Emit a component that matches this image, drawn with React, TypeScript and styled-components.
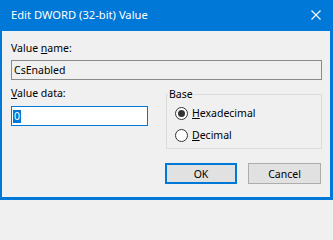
import React from 'react';
import styled, { createGlobalStyle } from 'styled-components';

const accent = '#0078d7';
const uiFont = `"Segoe UI", "Noto Sans", sans-serif`;

const GlobalStyle = createGlobalStyle`
    html, body {
        margin: 0;
        padding: 0;
        background: #f0f0f0;
    }
    * {
        box-sizing: border-box;
    }
`;

const Window = styled.div`
    width: 333px;
    height: 200px;
    display: flex;
    flex-direction: column;
    background: #f0f0f0;
    border-left: 2px solid ${accent};
    border-right: 3px solid ${accent};
    border-bottom: 3px solid ${accent};
    font-family: ${uiFont};
    font-size: 10.5px;
    color: #000;
    overflow: hidden;
`;

const TitleBar = styled.div`
    height: 31px;
    flex: none;
    display: flex;
    align-items: center;
    justify-content: space-between;
    padding: 0 9px 0 9px;
    background: ${accent};
    color: #fff;
    font-size: 11.2px;
`;

const Title = styled.span`
    line-height: 14px;
    padding-bottom: 1px;
`;

const CloseIcon = styled.svg`
    width: 10px;
    height: 10px;
    display: block;
    margin-top: -1px;
`;

const Body = styled.div`
    display: flex;
    flex-direction: column;
    padding: 10px 8px 0 9px;
`;

const Label = styled.div`
    line-height: 14px;
    white-space: nowrap;
`;

const TextBox = styled.div<{ $focused?: boolean }>`
    height: 20px;
    margin-top: ${p => (p.$focused ? 6 : 5)}px;
    padding: 0 2px 0 2px;
    display: flex;
    align-items: center;
    border: 1px solid ${p => (p.$focused ? accent : '#8a8a8a')};
    background: ${p => (p.$focused ? '#fff' : '#f0f0f0')};
    line-height: 16px;
    white-space: nowrap;
`;

const Selected = styled.span`
    background: ${accent};
    color: #fff;
    line-height: 13px;
    padding: 0 1px;
    margin-left: -1px;
`;

const Lower = styled.div`
    display: grid;
    grid-template-columns: 137px 156px;
    column-gap: 18px;
    align-items: start;
    margin-top: 6px;
`;

const DataColumn = styled.div`
    display: flex;
    flex-direction: column;
`;

const GroupBox = styled.fieldset`
    margin: 1px 0 0 0;
    padding: 4px 8px 5px 8px;
    min-width: 0;
    border: 1px solid #dcdcdc;
    display: flex;
    flex-direction: column;
    gap: 6px;
`;

const Legend = styled.legend`
    margin-left: -7px;
    padding: 0 1px;
    line-height: 14px;
`;

const RadioRow = styled.label`
    display: flex;
    align-items: center;
    gap: 4px;
    height: 16px;
    line-height: 14px;
`;

const RadioCircle = styled.span<{ $checked?: boolean }>`
    width: 13px;
    height: 13px;
    flex: none;
    border-radius: 50%;
    border: 1px solid #333;
    background: #fff;
    display: flex;
    align-items: center;
    justify-content: center;

    &::after {
        content: '';
        width: 7px;
        height: 7px;
        border-radius: 50%;
        background: ${p => (p.$checked ? '#333' : 'transparent')};
    }
`;

const ButtonRow = styled.div`
    display: flex;
    justify-content: flex-end;
    gap: 11px;
    margin-top: 14px;
    padding-right: 1px;
`;

const Button = styled.div<{ $default?: boolean }>`
    width: ${p => (p.$default ? 72 : 73)}px;
    height: 21px;
    display: flex;
    align-items: center;
    justify-content: center;
    background: #e1e1e1;
    border: ${p => (p.$default ? `2px solid ${accent}` : '1px solid #adadad')};
    line-height: 14px;
`;

const Radio = ({ checked, hotkey, rest }: { checked?: boolean; hotkey: string; rest: string }) => (
    <RadioRow>
        <RadioCircle $checked={checked} />
        <span>
            <u>{hotkey}</u>
            {rest}
        </span>
    </RadioRow>
);

export default function App() {
    return (
        <>
            <GlobalStyle />
            <Window>
                <TitleBar>
                    <Title>Edit DWORD (32-bit) Value</Title>
                    <CloseIcon viewBox="0 0 10 10">
                        <path d="M0.5 0.5 L9.5 9.5 M9.5 0.5 L0.5 9.5" stroke="#fff" strokeWidth="1.1" fill="none" />
                    </CloseIcon>
                </TitleBar>
                <Body>
                    <Label>
                        Value <u>n</u>ame:
                    </Label>
                    <TextBox>CsEnabled</TextBox>
                    <Lower>
                        <DataColumn>
                            <Label>
                                <u>V</u>alue data:
                            </Label>
                            <TextBox $focused>
                                <Selected>0</Selected>
                            </TextBox>
                        </DataColumn>
                        <GroupBox>
                            <Legend>Base</Legend>
                            <Radio checked hotkey="H" rest="exadecimal" />
                            <Radio hotkey="D" rest="ecimal" />
                        </GroupBox>
                    </Lower>
                    <ButtonRow>
                        <Button $default>OK</Button>
                        <Button>Cancel</Button>
                    </ButtonRow>
                </Body>
            </Window>
        </>
    );
}
